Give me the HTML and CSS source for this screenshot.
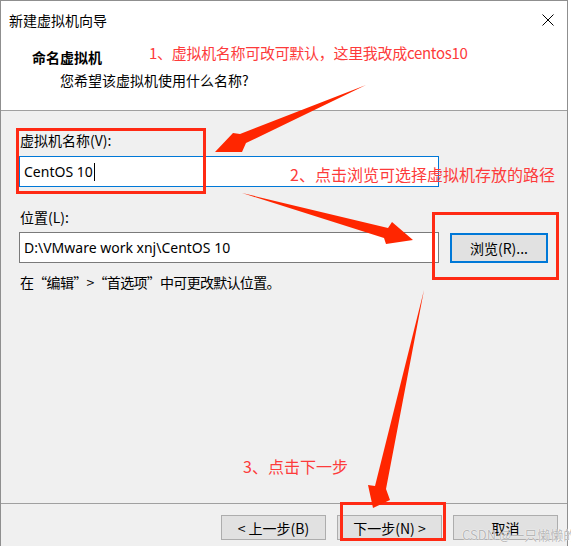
FILE: index.html
```html
<!DOCTYPE html>
<html lang="zh-CN">
<head>
<meta charset="utf-8">
<title>新建虚拟机向导</title>
<link rel="stylesheet" href="styles.css">
</head>
<body>
<div class="page">
  <div class="window">
    <div class="titlebar">
      <span class="title">新建虚拟机向导</span>
      <svg class="close" width="12" height="12" viewBox="0 0 12 12"><path d="M0.5 0.5 L11.5 11.5 M11.5 0.5 L0.5 11.5" stroke="#000" stroke-width="1" fill="none"/></svg>
    </div>
    <div class="header">
      <div class="h-title">命名虚拟机</div>
      <div class="h-sub">您希望该虚拟机使用什么名称?</div>
    </div>
    <div class="content">
      <div class="label">虚拟机名称(V):</div>
      <div class="input focus"><span class="latin">CentOS 10</span><span class="caret"></span></div>
      <div class="label label2">位置(L):</div>
      <div class="row">
        <div class="input"><span class="latin">D:\VMware work xnj\CentOS 10</span></div>
        <div class="btn browse">浏览(R)...</div>
      </div>
      <div class="hint">在“编辑”&gt;“首选项”中可更改默认位置。</div>
    </div>
    <div class="footer">
      <div class="btn fbtn">&lt; 上一步(B)</div>
      <div class="btn fbtn">下一步(N) &gt;</div>
      <div class="btn fbtn">取消</div>
    </div>
  </div>

  <div class="note note1">1、虚拟机名称可改可默认，这里我改成centos10</div>
  <div class="note note2">2、点击浏览可选择虚拟机存放的路径</div>
  <div class="note note3">3、点击下一步</div>

  <div class="redbox box1"></div>
  <div class="redbox box2"></div>
  <div class="redbox box3"></div>

  <svg class="arrows" width="571" height="546" viewBox="0 0 571 546">
    <polygon points="366,85 246,143 242,152 215,152 233,133 240,134" fill="#ff2600"/>
    <polygon points="242,193 384,238 386,244 413,240 392,222 388,228" fill="#ff2600"/>
    <polygon points="424,290 386,489 390,500 373,508 368,485 375,486" fill="#ff2600"/>
  </svg>

  <div class="watermark">CSDN @一只懒懒的喵</div>
</div>
</body>
</html>
```
FILE: styles.css
```css
html, body {
  margin: 0;
  padding: 0;
  background: #ffffff;
}
.page {
  position: relative;
  width: 571px;
  height: 546px;
  overflow: hidden;
  font-family: "Noto Sans CJK SC", "Noto Sans", sans-serif;
  font-size: 14px;
  color: #000;
}
.window {
  width: 566px;
  height: 545px;
  border: 1px solid #8f8f8f;
  border-bottom: none;
  background: #f0f0f0;
  display: flex;
  flex-direction: column;
}
.titlebar {
  height: 38px;
  background: #fff;
  display: flex;
  align-items: center;
  padding-left: 8px;
}
.title {
  line-height: 20px;
}
.close {
  margin-left: auto;
  margin-right: 13px;
}
.header {
  height: 72px;
  box-sizing: border-box;
  background: #fff;
  border-bottom: 1px solid #a0a0a0;
  padding-top: 8px;
}
.h-title {
  font-weight: bold;
  line-height: 20px;
  padding-left: 31px;
}
.h-sub {
  line-height: 20px;
  margin-top: 3px;
  padding-left: 59px;
}
.content {
  height: 392px;
  box-sizing: border-box;
  padding: 19px 0 0 18px;
}
.label {
  line-height: 20px;
  padding-left: 1px;
}
.label2 {
  margin-top: 20px;
}
.input {
  width: 420px;
  height: 31px;
  box-sizing: border-box;
  border: 1px solid #7a7a7a;
  background: #fff;
  padding-left: 4px;
  display: flex;
  align-items: center;
  margin-top: 6px;
}
.input.focus {
  border-color: #0078d7;
}
.latin {
  font-family: "Noto Sans", "Noto Sans CJK SC", sans-serif;
  font-size: 14px;
  line-height: 20px;
}
.caret {
  display: inline-block;
  width: 1px;
  height: 18px;
  background: #000;
  margin-left: 1px;
}
.row {
  display: flex;
  align-items: flex-start;
  margin-top: 5px;
}
.row .input {
  margin-top: 0;
}
.btn {
  box-sizing: border-box;
  background: #e1e1e1;
  border: 1px solid #adadad;
  display: flex;
  align-items: center;
  justify-content: center;
  line-height: 20px;
}
.browse {
  width: 98px;
  height: 30px;
  margin-left: 11px;
  margin-top: 1px;
  border: 2px solid #0078d7;
}
.hint {
  line-height: 20px;
  margin-top: 9px;
  padding-left: 1px;
  letter-spacing: -0.7px;
}
.footer {
  border-top: 1px solid #a0a0a0;
  display: flex;
  justify-content: flex-end;
  padding: 11px 9px 0 0;
  gap: 11px;
}
.fbtn {
  width: 105px;
  height: 25px;
}
.note {
  position: absolute;
  color: #fd3b3b;
  font-size: 16px;
  line-height: 20px;
  white-space: nowrap;
}
.note1 { left: 149px; top: 43px; font-size: 15px; letter-spacing: -0.3px; }
.note2 { left: 290px; top: 164px; }
.note3 { left: 243px; top: 456px; }
.redbox {
  position: absolute;
  box-sizing: border-box;
  border: 3px solid #ff2a14;
}
.box1 { left: 16px; top: 128px; width: 190px; height: 66px; }
.box2 { left: 432px; top: 212px; width: 127px; height: 68px; }
.box3 { left: 340px; top: 502px; width: 106px; height: 39px; }
.arrows {
  position: absolute;
  left: 0;
  top: 0;
  pointer-events: none;
}
.watermark {
  position: absolute;
  left: 462px;
  top: 526px;
  font-size: 13px;
  line-height: 18px;
  color: rgba(160, 160, 160, 0.75);
  text-shadow: 0 0 1px #fff, 0 0 1px #fff;
  white-space: nowrap;
}
```
